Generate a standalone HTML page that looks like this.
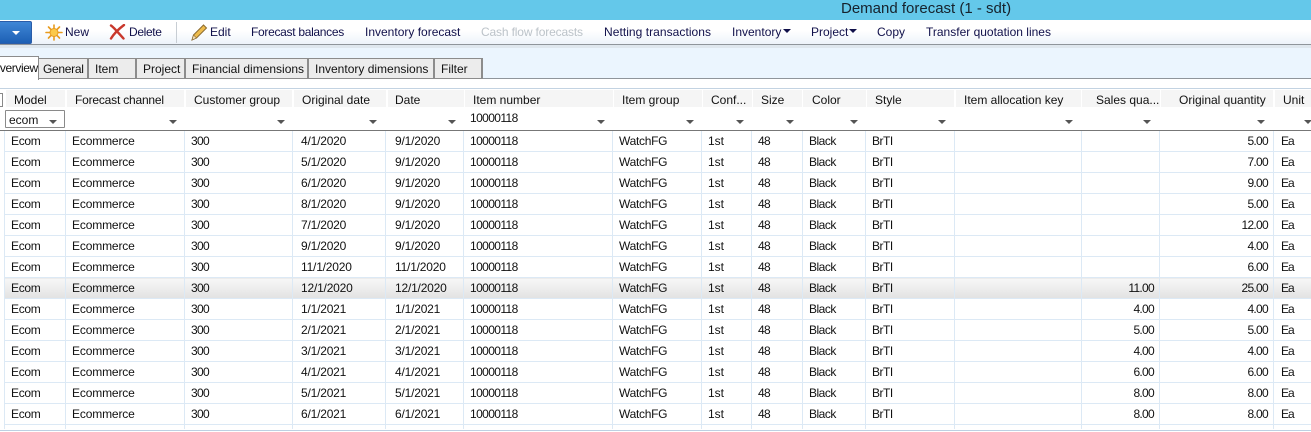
<!DOCTYPE html>
<html><head><meta charset="utf-8"><style>
html,body{margin:0;padding:0;background:#fff}
body{position:relative;width:1311px;height:432px;overflow:hidden;font:12px "Liberation Sans",sans-serif;color:#111}
div,span{position:absolute;white-space:nowrap}
.tb{top:24px;color:#10104a;line-height:16px;font-size:12px}
.tab{top:58px;height:21px;box-sizing:border-box;background:#ececec;border:1px solid #8c8c8c;border-left:0;border-right-width:2px;line-height:19px;color:#111}
.tab span{top:1px}
.h{top:90px;height:17px;background:#f5f5f5}
.ht{top:92px;line-height:16px;color:#111}
.a{width:0;height:0;border-left:4px solid transparent;border-right:4px solid transparent;border-top:4px solid #555;top:120px}
.v{top:131px;width:1px;height:298px;background:#dce9f5}
table{position:absolute;left:5px;top:131px;border-collapse:collapse;table-layout:fixed;width:1320px}
td{height:20px;padding:0;border-bottom:1px solid #dce9f5;white-space:nowrap;overflow:hidden;line-height:20px;color:#111}
td:nth-child(1){padding-left:6px;letter-spacing:-.3px}td:nth-child(2){padding-left:6px;letter-spacing:-.15px}td:nth-child(3){padding-left:6px;letter-spacing:-.67px}
td:nth-child(4){padding-left:8px;letter-spacing:-.2px}td:nth-child(5){padding-left:9px;letter-spacing:-.2px}td:nth-child(6){padding-left:6px;letter-spacing:-.6px}
td:nth-child(7){padding-left:6px;letter-spacing:-.3px}td:nth-child(8){padding-left:6px}td:nth-child(9){padding-left:6px;letter-spacing:-.67px}
td:nth-child(10){padding-left:7px;letter-spacing:-.5px}td:nth-child(11){padding-left:6px;letter-spacing:-.5px}
td:nth-child(13),td:nth-child(14){text-align:right;padding-right:6px;letter-spacing:-.7px}
td:nth-child(15){padding-left:7px;letter-spacing:-1px}
tr.s td{background:linear-gradient(#f7f7f7,#e2e2e2)}
</style></head><body>
<div style="left:0;top:0;width:1311px;height:20px;background:#64c8ea"></div>
<div style="left:841px;top:0;font-size:15px;line-height:18px;color:#16222c">Demand forecast (1 - sdt)</div>
<div style="left:0;top:20px;width:1311px;height:24px;background:linear-gradient(#fff,#fff 45%,#edf3fa)"></div>
<div style="left:0;top:44px;width:1311px;height:1px;background:#8f959b"></div>
<div style="left:0;top:45px;width:1311px;height:3px;background:#dfe7ee"></div>
<div style="left:0;top:48px;width:1311px;height:30px;background:#ebf5fe"></div>
<div style="left:0;top:78px;width:1311px;height:1px;background:#8f959b"></div>
<div style="left:-3px;top:21px;width:33px;height:21px;background:linear-gradient(#3f87d6,#1d5fb4);border:1px solid #2a5ca8;border-radius:2px"></div>
<div style="left:12px;top:31px;width:0;height:0;border-left:4px solid transparent;border-right:4px solid transparent;border-top:4px solid #fff"></div>
<svg style="position:absolute;left:45px;top:24px" width="18" height="17" viewBox="0 0 18 17"><g stroke="#e89b1e" stroke-width="1.6" stroke-linecap="round"><path d="M9 1v15M1 8.500h16M3.500 3l11 11M14.500 3l-11 11"/></g><circle cx="9" cy="8.500" r="4" fill="#fbc94a" stroke="#e89b1e"/></svg>
<svg style="position:absolute;left:109px;top:24px" width="17" height="16" viewBox="0 0 17 16"><path d="M2 1.500c3 2 7 7 12.500 13M15 1C11 4 6 8 2 14.500" fill="none" stroke="#c9382c" stroke-width="2.400" stroke-linecap="round"/></svg>
<div style="left:176px;top:22px;width:1px;height:21px;background:#c8ced4"></div>
<svg style="position:absolute;left:190px;top:23px" width="18" height="19" viewBox="0 0 18 19"><path d="M2 17l1.500-5L13.500 2l3 3-10 10z" fill="#eebc4d" stroke="#8a6a30"/><path d="M2 17l1.500-5 3 3z" fill="#f4dfb8" stroke="#8a6a30" stroke-width=".6"/></svg>
<span class="tb" style="left:65px">New</span>
<span class="tb" style="left:129px;letter-spacing:-.35px">Delete</span>
<span class="tb" style="left:210px">Edit</span>
<span class="tb" style="left:251px;letter-spacing:-.3px">Forecast balances</span>
<span class="tb" style="left:365px">Inventory forecast</span>
<span class="tb" style="left:481px;color:#bcc3c9;letter-spacing:-.15px">Cash flow forecasts</span>
<span class="tb" style="left:604px;letter-spacing:.05px">Netting transactions</span>
<span class="tb" style="left:732px">Inventory</span>
<div style="left:783px;top:29px;width:0;height:0;border-left:4px solid transparent;border-right:4px solid transparent;border-top:4px solid #10104a"></div>
<span class="tb" style="left:811px">Project</span>
<div style="left:849px;top:29px;width:0;height:0;border-left:4px solid transparent;border-right:4px solid transparent;border-top:4px solid #10104a"></div>
<span class="tb" style="left:877px">Copy</span>
<span class="tb" style="left:926px">Transfer quotation lines</span>

<div class="tab" style="left:38px;width:51px"><span style="left:5px;letter-spacing:-.3px">General</span></div>
<div class="tab" style="left:89px;width:48px"><span style="left:6px">Item</span></div>
<div class="tab" style="left:137px;width:49px"><span style="left:6px">Project</span></div>
<div class="tab" style="left:186px;width:123px"><span style="left:6px">Financial dimensions</span></div>
<div class="tab" style="left:309px;width:126px"><span style="left:6px">Inventory dimensions</span></div>
<div class="tab" style="left:435px;width:48px"><span style="left:6px">Filter</span></div>
<div style="left:0;top:56px;width:39px;height:24px;background:#fff;border:1px solid #8c8c8c;border-left:0;border-bottom:0;box-sizing:border-box;overflow:hidden"><span style="left:-9px;top:2px;line-height:19px;letter-spacing:-.4px">Overview</span></div>

<div style="left:0;top:88px;width:1311px;height:1px;background:#c3d3e2"></div>
<div style="left:0;top:93px;width:2px;height:12px;border:1px solid #888;border-left:0"></div>
<div class="h" style="left:6px;width:59px"></div><div class="h" style="left:67px;width:117px"></div><div class="h" style="left:186px;width:106px"></div><div class="h" style="left:294px;width:92px"></div><div class="h" style="left:388px;width:76px"></div><div class="h" style="left:465px;width:148px"></div><div class="h" style="left:614px;width:88px"></div><div class="h" style="left:703px;width:49px"></div><div class="h" style="left:753px;width:49px"></div><div class="h" style="left:803px;width:63px"></div><div class="h" style="left:867px;width:87px"></div><div class="h" style="left:956px;width:125px"></div><div class="h" style="left:1082px;width:78px"></div><div class="h" style="left:1161px;width:112px"></div><div class="h" style="left:1275px;width:36px"></div>
<span class="ht" style="left:14px">Model</span><span class="ht" style="left:75px;letter-spacing:-.2px">Forecast channel</span><span class="ht" style="left:194px">Customer group</span><span class="ht" style="left:302px">Original date</span><span class="ht" style="left:395px">Date</span><span class="ht" style="left:473px">Item number</span><span class="ht" style="left:622px">Item group</span><span class="ht" style="left:711px">Conf...</span><span class="ht" style="left:761px">Size</span><span class="ht" style="left:812px">Color</span><span class="ht" style="left:875px">Style</span><span class="ht" style="left:964px">Item allocation key</span><span class="ht" style="left:1096px">Sales qua...</span><span class="ht" style="left:1179px">Original quantity</span><span class="ht" style="left:1283px">Unit</span>

<div style="left:5px;top:110px;width:58px;height:16px;border:1px solid #8a8a8a;border-radius:1px;line-height:18px"><span style="left:3px;top:0">ecom</span></div>
<span style="left:470px;top:110px;line-height:16px;letter-spacing:-.6px">10000118</span>
<div class="a" style="left:49px"></div><div class="a" style="left:169px"></div><div class="a" style="left:277px"></div><div class="a" style="left:369px"></div><div class="a" style="left:448px"></div><div class="a" style="left:597px"></div><div class="a" style="left:686px"></div><div class="a" style="left:736px"></div><div class="a" style="left:786px"></div><div class="a" style="left:850px"></div><div class="a" style="left:938px"></div><div class="a" style="left:1065px"></div><div class="a" style="left:1143px"></div><div class="a" style="left:1257px"></div><div class="a" style="left:1304px"></div>
<div style="left:0;top:130px;width:1311px;height:1px;background:#777"></div>

<table><colgroup><col style="width:61px"><col style="width:119px"><col style="width:108px"><col style="width:93px"><col style="width:78px"><col style="width:149px"><col style="width:89px"><col style="width:50px"><col style="width:50px"><col style="width:64px"><col style="width:88px"><col style="width:127px"><col style="width:79px"><col style="width:114px"><col style="width:51px"></colgroup>
<tr><td>Ecom</td><td>Ecommerce</td><td>300</td><td>4/1/2020</td><td>9/1/2020</td><td>10000118</td><td>WatchFG</td><td>1st</td><td>48</td><td>Black</td><td>BrTI</td><td></td><td></td><td>5.00</td><td>Ea</td></tr>
<tr><td>Ecom</td><td>Ecommerce</td><td>300</td><td>5/1/2020</td><td>9/1/2020</td><td>10000118</td><td>WatchFG</td><td>1st</td><td>48</td><td>Black</td><td>BrTI</td><td></td><td></td><td>7.00</td><td>Ea</td></tr>
<tr><td>Ecom</td><td>Ecommerce</td><td>300</td><td>6/1/2020</td><td>9/1/2020</td><td>10000118</td><td>WatchFG</td><td>1st</td><td>48</td><td>Black</td><td>BrTI</td><td></td><td></td><td>9.00</td><td>Ea</td></tr>
<tr><td>Ecom</td><td>Ecommerce</td><td>300</td><td>8/1/2020</td><td>9/1/2020</td><td>10000118</td><td>WatchFG</td><td>1st</td><td>48</td><td>Black</td><td>BrTI</td><td></td><td></td><td>5.00</td><td>Ea</td></tr>
<tr><td>Ecom</td><td>Ecommerce</td><td>300</td><td>7/1/2020</td><td>9/1/2020</td><td>10000118</td><td>WatchFG</td><td>1st</td><td>48</td><td>Black</td><td>BrTI</td><td></td><td></td><td>12.00</td><td>Ea</td></tr>
<tr><td>Ecom</td><td>Ecommerce</td><td>300</td><td>9/1/2020</td><td>9/1/2020</td><td>10000118</td><td>WatchFG</td><td>1st</td><td>48</td><td>Black</td><td>BrTI</td><td></td><td></td><td>4.00</td><td>Ea</td></tr>
<tr><td>Ecom</td><td>Ecommerce</td><td>300</td><td>11/1/2020</td><td>11/1/2020</td><td>10000118</td><td>WatchFG</td><td>1st</td><td>48</td><td>Black</td><td>BrTI</td><td></td><td></td><td>6.00</td><td>Ea</td></tr>
<tr class="s"><td>Ecom</td><td>Ecommerce</td><td>300</td><td>12/1/2020</td><td>12/1/2020</td><td>10000118</td><td>WatchFG</td><td>1st</td><td>48</td><td>Black</td><td>BrTI</td><td></td><td>11.00</td><td>25.00</td><td>Ea</td></tr>
<tr><td>Ecom</td><td>Ecommerce</td><td>300</td><td>1/1/2021</td><td>1/1/2021</td><td>10000118</td><td>WatchFG</td><td>1st</td><td>48</td><td>Black</td><td>BrTI</td><td></td><td>4.00</td><td>4.00</td><td>Ea</td></tr>
<tr><td>Ecom</td><td>Ecommerce</td><td>300</td><td>2/1/2021</td><td>2/1/2021</td><td>10000118</td><td>WatchFG</td><td>1st</td><td>48</td><td>Black</td><td>BrTI</td><td></td><td>5.00</td><td>5.00</td><td>Ea</td></tr>
<tr><td>Ecom</td><td>Ecommerce</td><td>300</td><td>3/1/2021</td><td>3/1/2021</td><td>10000118</td><td>WatchFG</td><td>1st</td><td>48</td><td>Black</td><td>BrTI</td><td></td><td>4.00</td><td>4.00</td><td>Ea</td></tr>
<tr><td>Ecom</td><td>Ecommerce</td><td>300</td><td>4/1/2021</td><td>4/1/2021</td><td>10000118</td><td>WatchFG</td><td>1st</td><td>48</td><td>Black</td><td>BrTI</td><td></td><td>6.00</td><td>6.00</td><td>Ea</td></tr>
<tr><td>Ecom</td><td>Ecommerce</td><td>300</td><td>5/1/2021</td><td>5/1/2021</td><td>10000118</td><td>WatchFG</td><td>1st</td><td>48</td><td>Black</td><td>BrTI</td><td></td><td>8.00</td><td>8.00</td><td>Ea</td></tr>
<tr><td>Ecom</td><td>Ecommerce</td><td>300</td><td>6/1/2021</td><td>6/1/2021</td><td>10000118</td><td>WatchFG</td><td>1st</td><td>48</td><td>Black</td><td>BrTI</td><td></td><td>8.00</td><td>8.00</td><td>Ea</td></tr>
</table>
<div class="v" style="left:4px"></div><div class="v" style="left:65px"></div><div class="v" style="left:184px"></div><div class="v" style="left:292px"></div><div class="v" style="left:385px"></div><div class="v" style="left:463px"></div><div class="v" style="left:612px"></div><div class="v" style="left:701px"></div><div class="v" style="left:751px"></div><div class="v" style="left:802px"></div><div class="v" style="left:865px"></div><div class="v" style="left:954px"></div><div class="v" style="left:1081px"></div><div class="v" style="left:1159px"></div><div class="v" style="left:1273px"></div>
<div style="left:0;top:430px;width:1311px;height:2px;background:#fff;border-top:1px solid #bdd0e2;box-sizing:border-box"></div>
</body></html>
